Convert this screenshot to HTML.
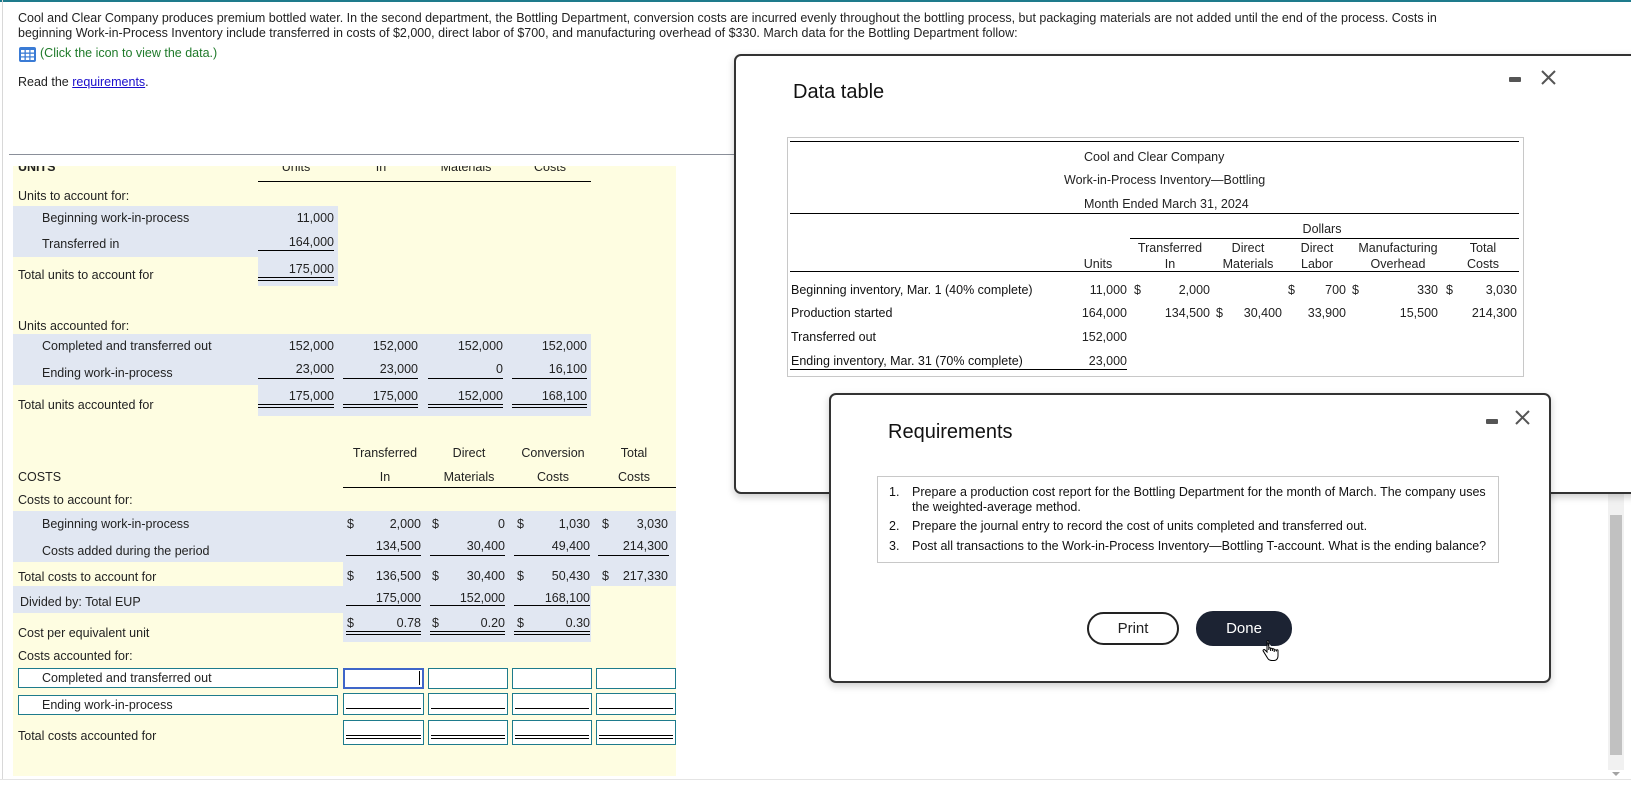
<!DOCTYPE html>
<html><head><meta charset="utf-8"><style>
*{margin:0;padding:0;box-sizing:border-box}
body{width:1631px;height:797px;overflow:hidden;background:#fff;font-family:"Liberation Sans",Arial,sans-serif;font-size:12.5px;color:#222;position:relative}
.a{position:absolute;white-space:nowrap}
.r{position:absolute;white-space:nowrap;text-align:right;width:120px}
.c{position:absolute;white-space:nowrap;text-align:center;width:140px}
.bl{position:absolute;background:#e1e7f2}
.ln{position:absolute;height:1px;background:#000}
.dl{position:absolute;height:4px;border-top:1px solid #000;border-bottom:1px solid #000}
.box{position:absolute;border:1px solid #1e7b8c;background:#fff}
</style></head><body>
<div class="a" style="left:0;top:0;width:1631px;height:2px;background:#1e7b8c"></div>
<div class="a" style="left:2px;top:0;width:1px;height:780px;background:#d8d8d8"></div>
<div class="a" style="left:0;top:779px;width:1631px;height:1px;background:#e4e4e4"></div>
<div class="a" style="left:18px;top:11px">Cool and Clear Company produces premium bottled water. In the second department, the Bottling Department, conversion costs are incurred evenly throughout the bottling process, but packaging materials are not added until the end of the process. Costs in</div>
<div class="a" style="left:18px;top:26px">beginning Work-in-Process Inventory include transferred in costs of $2,000, direct labor of $700, and manufacturing overhead of $330. March data for the Bottling Department follow:</div>
<svg class="a" style="left:19px;top:47px" width="17" height="15" viewBox="0 0 17 15"><rect x="0" y="0" width="17" height="15" rx="2" fill="#3a7bd5"/><g fill="#fff"><rect x="2" y="3" width="3.5" height="2.5"/><rect x="6.8" y="3" width="3.5" height="2.5"/><rect x="11.5" y="3" width="3.5" height="2.5"/><rect x="2" y="6.8" width="3.5" height="2.5"/><rect x="6.8" y="6.8" width="3.5" height="2.5"/><rect x="11.5" y="6.8" width="3.5" height="2.5"/><rect x="2" y="10.5" width="3.5" height="2.5"/><rect x="6.8" y="10.5" width="3.5" height="2.5"/><rect x="11.5" y="10.5" width="3.5" height="2.5"/></g></svg>
<div class="a" style="left:40px;top:46px;color:#1f7a2a">(Click the icon to view the data.)</div>
<div class="a" style="left:18px;top:75px">Read the <span style="color:#1a0dcc;text-decoration:underline">requirements</span>.</div>
<div class="a" style="left:9px;top:154px;width:730px;height:1px;background:#8a8f99"></div>

<div class="a" style="left:13px;top:166px;width:663px;height:610px;background:#fefde1;overflow:hidden">
</div>
<div class="a" style="left:0;top:166px;width:700px;height:610px;overflow:hidden">
 <div class="a" style="left:18px;top:-6px;font-weight:bold">UNITS</div>
 <div class="c" style="left:226px;top:-6px">Units</div>
 <div class="c" style="left:311px;top:-6px">In</div>
 <div class="c" style="left:396px;top:-6px">Materials</div>
 <div class="c" style="left:480px;top:-6px">Costs</div>
</div>
<div class="ln" style="left:258px;top:181px;width:333px"></div>
<div class="a" style="left:18px;top:189px">Units to account for:</div>
<div class="bl" style="left:13px;top:206px;width:325px;height:51px"></div>
<div class="bl" style="left:258px;top:257px;width:80px;height:29px"></div>
<div class="a" style="left:42px;top:211px">Beginning work-in-process</div>
<div class="r" style="left:214px;top:211px">11,000</div>
<div class="a" style="left:42px;top:237px">Transferred in</div>
<div class="r" style="left:214px;top:235px">164,000</div>
<div class="ln" style="left:258px;top:250px;width:76px"></div>
<div class="a" style="left:18px;top:268px">Total units to account for</div>
<div class="r" style="left:214px;top:262px">175,000</div>
<div class="dl" style="left:258px;top:277px;width:76px"></div>

<div class="a" style="left:18px;top:319px">Units accounted for:</div>
<div class="bl" style="left:13px;top:334px;width:578px;height:51px"></div>
<div class="bl" style="left:258px;top:385px;width:333px;height:31px"></div>
<div class="a" style="left:42px;top:339px">Completed and transferred out</div>
<div class="a" style="left:42px;top:366px">Ending work-in-process</div>
<div class="a" style="left:18px;top:398px">Total units accounted for</div>
<div class="r" style="left:214px;top:339px">152,000</div><div class="r" style="left:298px;top:339px">152,000</div><div class="r" style="left:383px;top:339px">152,000</div><div class="r" style="left:467px;top:339px">152,000</div>
<div class="r" style="left:214px;top:362px">23,000</div><div class="r" style="left:298px;top:362px">23,000</div><div class="r" style="left:383px;top:362px">0</div><div class="r" style="left:467px;top:362px">16,100</div>
<div class="ln" style="left:258px;top:378px;width:76px"></div><div class="ln" style="left:343px;top:378px;width:75px"></div><div class="ln" style="left:428px;top:378px;width:75px"></div><div class="ln" style="left:512px;top:378px;width:75px"></div>
<div class="r" style="left:214px;top:389px">175,000</div><div class="r" style="left:298px;top:389px">175,000</div><div class="r" style="left:383px;top:389px">152,000</div><div class="r" style="left:467px;top:389px">168,100</div>
<div class="dl" style="left:258px;top:404px;width:76px"></div><div class="dl" style="left:343px;top:404px;width:75px"></div><div class="dl" style="left:428px;top:404px;width:75px"></div><div class="dl" style="left:512px;top:404px;width:75px"></div>

<div class="c" style="left:315px;top:446px">Transferred</div><div class="c" style="left:399px;top:446px">Direct</div><div class="c" style="left:483px;top:446px">Conversion</div><div class="c" style="left:564px;top:446px">Total</div>
<div class="a" style="left:18px;top:470px">COSTS</div>
<div class="c" style="left:315px;top:470px">In</div><div class="c" style="left:399px;top:470px">Materials</div><div class="c" style="left:483px;top:470px">Costs</div><div class="c" style="left:564px;top:470px">Costs</div>
<div class="ln" style="left:343px;top:487px;width:333px"></div>
<div class="a" style="left:18px;top:493px">Costs to account for:</div>
<div class="bl" style="left:13px;top:511px;width:663px;height:51px"></div>
<div class="bl" style="left:343px;top:562px;width:333px;height:24px"></div>
<div class="bl" style="left:13px;top:586px;width:578px;height:27px"></div>
<div class="bl" style="left:343px;top:613px;width:248px;height:29px"></div>
<div class="a" style="left:42px;top:517px">Beginning work-in-process</div>
<div class="a" style="left:42px;top:544px">Costs added during the period</div>
<div class="a" style="left:18px;top:570px">Total costs to account for</div>
<div class="a" style="left:20px;top:595px">Divided by: Total EUP</div>
<div class="a" style="left:18px;top:626px">Cost per equivalent unit</div>
<div class="a" style="left:18px;top:649px">Costs accounted for:</div>

<div class="a" style="left:347px;top:517px">$</div><div class="r" style="left:301px;top:517px">2,000</div><div class="a" style="left:432px;top:517px">$</div><div class="r" style="left:385px;top:517px">0</div><div class="a" style="left:517px;top:517px">$</div><div class="r" style="left:470px;top:517px">1,030</div><div class="a" style="left:602px;top:517px">$</div><div class="r" style="left:548px;top:517px">3,030</div>
<div class="r" style="left:301px;top:539px">134,500</div><div class="r" style="left:385px;top:539px">30,400</div><div class="r" style="left:470px;top:539px">49,400</div><div class="r" style="left:548px;top:539px">214,300</div>
<div class="ln" style="left:346px;top:555px;width:75px"></div><div class="ln" style="left:430px;top:555px;width:75px"></div><div class="ln" style="left:514px;top:555px;width:76px"></div><div class="ln" style="left:598px;top:555px;width:71px"></div>
<div class="a" style="left:347px;top:569px">$</div><div class="r" style="left:301px;top:569px">136,500</div><div class="a" style="left:432px;top:569px">$</div><div class="r" style="left:385px;top:569px">30,400</div><div class="a" style="left:517px;top:569px">$</div><div class="r" style="left:470px;top:569px">50,430</div><div class="a" style="left:602px;top:569px">$</div><div class="r" style="left:548px;top:569px">217,330</div>
<div class="r" style="left:301px;top:591px">175,000</div><div class="r" style="left:385px;top:591px">152,000</div><div class="r" style="left:470px;top:591px">168,100</div>
<div class="ln" style="left:346px;top:605px;width:75px"></div><div class="ln" style="left:430px;top:605px;width:75px"></div><div class="ln" style="left:514px;top:605px;width:76px"></div>
<div class="a" style="left:347px;top:616px">$</div><div class="r" style="left:301px;top:616px">0.78</div><div class="a" style="left:432px;top:616px">$</div><div class="r" style="left:385px;top:616px">0.20</div><div class="a" style="left:517px;top:616px">$</div><div class="r" style="left:470px;top:616px">0.30</div>
<div class="dl" style="left:346px;top:631px;width:75px"></div><div class="dl" style="left:430px;top:631px;width:75px"></div><div class="dl" style="left:514px;top:631px;width:76px"></div>

<div class="box" style="left:18px;top:668px;width:320px;height:20px"></div><div class="a" style="left:42px;top:671px">Completed and transferred out</div>
<div class="box" style="left:18px;top:695px;width:320px;height:20px"></div><div class="a" style="left:42px;top:698px">Ending work-in-process</div>
<div class="a" style="left:18px;top:729px">Total costs accounted for</div>
<div class="box" style="left:343px;top:668px;width:81px;height:21px;border:2px solid #3f66c9"></div><div class="a" style="left:419px;top:671px;width:1px;height:14px;background:#000"></div>
<div class="box" style="left:428px;top:668px;width:80px;height:21px"></div><div class="box" style="left:512px;top:668px;width:80px;height:21px"></div><div class="box" style="left:596px;top:668px;width:80px;height:21px"></div>
<div class="box" style="left:343px;top:693px;width:81px;height:22px"></div><div class="box" style="left:428px;top:693px;width:80px;height:22px"></div><div class="box" style="left:512px;top:693px;width:80px;height:22px"></div><div class="box" style="left:596px;top:693px;width:80px;height:22px"></div>
<div class="ln" style="left:346px;top:708px;width:75px"></div><div class="ln" style="left:431px;top:708px;width:74px"></div><div class="ln" style="left:515px;top:708px;width:74px"></div><div class="ln" style="left:599px;top:708px;width:74px"></div>
<div class="box" style="left:343px;top:720px;width:81px;height:25px"></div><div class="box" style="left:428px;top:720px;width:80px;height:25px"></div><div class="box" style="left:512px;top:720px;width:80px;height:25px"></div><div class="box" style="left:596px;top:720px;width:80px;height:25px"></div>
<div class="dl" style="left:346px;top:735px;width:75px"></div><div class="dl" style="left:431px;top:735px;width:74px"></div><div class="dl" style="left:515px;top:735px;width:74px"></div><div class="dl" style="left:599px;top:735px;width:74px"></div>

<div class="a" style="left:1608px;top:490px;width:16px;height:280px;background:#f1f1f1"></div>
<div class="a" style="left:1610px;top:515px;width:12px;height:240px;background:#c1c1c1"></div>
<div class="a" style="left:1612px;top:772px;border-left:4px solid transparent;border-right:4px solid transparent;border-top:4px solid #a3a3a3"></div>

<div class="a" style="left:734px;top:54px;width:920px;height:440px;background:#fff;border:2px solid #333;border-radius:7px;box-shadow:0 3px 8px rgba(0,0,0,.2)"></div>
<div class="a" style="left:793px;top:81px;font-size:20px;color:#111">Data table</div>
<div class="a" style="left:1509px;top:77px;width:12px;height:5px;background:#555;border-radius:1px"></div>
<svg class="a" style="left:1540px;top:69px" width="17" height="17"><path d="M2 2L15 15M15 2L2 15" stroke="#555" stroke-width="2"/></svg>
<div class="a" style="left:787px;top:137px;width:737px;height:240px;border:1px solid #c8c8c8"></div>
<div class="ln" style="left:790px;top:141px;width:729px"></div>
<div class="c" style="left:1084px;top:150px">Cool and Clear Company</div>
<div class="c" style="left:1064px;top:173px;width:180px">Work-in-Process Inventory—Bottling</div>
<div class="c" style="left:1084px;top:197px">Month Ended March 31, 2024</div>
<div class="ln" style="left:790px;top:213px;width:729px"></div>
<div class="c" style="left:1252px;top:222px">Dollars</div>
<div class="ln" style="left:1130px;top:238px;width:389px"></div>
<div class="c" style="left:1100px;top:241px">Transferred</div><div class="c" style="left:1178px;top:241px">Direct</div><div class="c" style="left:1247px;top:241px">Direct</div><div class="c" style="left:1328px;top:241px">Manufacturing</div><div class="c" style="left:1413px;top:241px">Total</div>
<div class="c" style="left:1028px;top:257px">Units</div><div class="c" style="left:1100px;top:257px">In</div><div class="c" style="left:1178px;top:257px">Materials</div><div class="c" style="left:1247px;top:257px">Labor</div><div class="c" style="left:1328px;top:257px">Overhead</div><div class="c" style="left:1413px;top:257px">Costs</div>
<div class="ln" style="left:790px;top:271px;width:729px"></div>
<div class="a" style="left:791px;top:283px;color:#111">Beginning inventory, Mar. 1 (40% complete)</div>
<div class="a" style="left:791px;top:306px;color:#111">Production started</div>
<div class="a" style="left:791px;top:330px;color:#111">Transferred out</div>
<div class="a" style="left:791px;top:354px;color:#111">Ending inventory, Mar. 31 (70% complete)</div>
<div class="ln" style="left:790px;top:369px;width:337px"></div>
<div class="r" style="left:1007px;top:283px">11,000</div><div class="a" style="left:1134px;top:283px">$</div><div class="r" style="left:1090px;top:283px">2,000</div><div class="a" style="left:1288px;top:283px">$</div><div class="r" style="left:1226px;top:283px">700</div><div class="a" style="left:1352px;top:283px">$</div><div class="r" style="left:1318px;top:283px">330</div><div class="a" style="left:1446px;top:283px">$</div><div class="r" style="left:1397px;top:283px">3,030</div>
<div class="r" style="left:1007px;top:306px">164,000</div><div class="r" style="left:1090px;top:306px">134,500</div><div class="a" style="left:1216px;top:306px">$</div><div class="r" style="left:1162px;top:306px">30,400</div><div class="r" style="left:1226px;top:306px">33,900</div><div class="r" style="left:1318px;top:306px">15,500</div><div class="r" style="left:1397px;top:306px">214,300</div>
<div class="r" style="left:1007px;top:330px">152,000</div>
<div class="r" style="left:1007px;top:354px">23,000</div>

<div class="a" style="left:829px;top:393px;width:722px;height:290px;background:#fff;border:2px solid #333;border-radius:7px;box-shadow:0 3px 8px rgba(0,0,0,.2)"></div>
<div class="a" style="left:888px;top:421px;font-size:20px;color:#111">Requirements</div>
<div class="a" style="left:1486px;top:419px;width:12px;height:5px;background:#555;border-radius:1px"></div>
<svg class="a" style="left:1514px;top:409px" width="17" height="17"><path d="M2 2L15 15M15 2L2 15" stroke="#555" stroke-width="2"/></svg>
<div class="a" style="left:877px;top:476px;width:622px;height:87px;border:1px solid #c8c8c8"></div>
<div class="a" style="left:889px;top:485px;color:#111">1.</div><div class="a" style="left:912px;top:485px;color:#111">Prepare a production cost report for the Bottling Department for the month of March. The company uses</div>
<div class="a" style="left:912px;top:500px;color:#111">the weighted-average method.</div>
<div class="a" style="left:889px;top:519px;color:#111">2.</div><div class="a" style="left:912px;top:519px;color:#111">Prepare the journal entry to record the cost of units completed and transferred out.</div>
<div class="a" style="left:889px;top:539px;color:#111">3.</div><div class="a" style="left:912px;top:539px;color:#111">Post all transactions to the Work-in-Process Inventory—Bottling T-account. What is the ending balance?</div>
<div class="a" style="left:1087px;top:612px;width:92px;height:33px;border:2px solid #222;border-radius:17px;text-align:center;line-height:29px;font-size:15px;color:#222">Print</div>
<div class="a" style="left:1196px;top:611px;width:96px;height:35px;background:#1c2333;border-radius:17px;text-align:center;line-height:35px;font-size:15px;color:#fff">Done</div>
<svg class="a" style="left:1262px;top:640px" width="18" height="22" viewBox="0 0 18 22"><path d="M5 1.5v10.5l-2-2c-1-1-2.5 0-1.7 1.2L5.5 18c1 1.7 2.300 2.5 4.5 2.5h2c2.5 0 4-2 4-4.5v-5.5c0-1-1.6-1-1.6 0v1M5 1.5c0-1 1.800-1 1.8 0V10M6.8 8.5c0-1 1.8-1 1.8 0V11M8.6 9c0-1 1.8-1 1.8 0v2M10.4 9.5c0-1 1.8-1 1.8 0v2.5M12.2 10.5c0-1 1.6-1 1.6 0" fill="#fff" stroke="#000" stroke-width="1"/></svg>
</body></html>
